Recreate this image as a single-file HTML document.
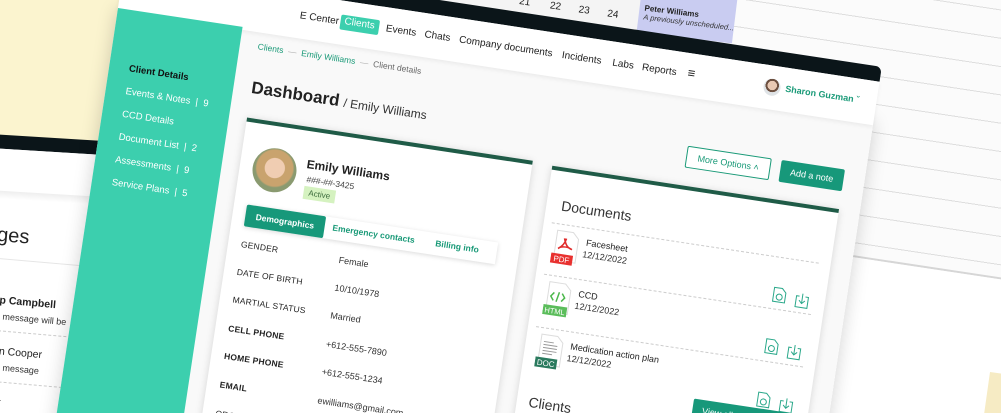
<!DOCTYPE html>
<html style="width:1001px;height:413px;overflow:hidden"><head><meta charset="utf-8"><style>
*{box-sizing:border-box;margin:0;padding:0}
body{width:1001px;height:413px;overflow:hidden;position:relative;background:#f4f4f4;font-family:"Liberation Sans",sans-serif;color:#222}
.abs{position:absolute}
.rot{position:absolute;transform-origin:0 0}
.panel{left:118px;top:8px;transform:rotate(8.6deg);width:764px;height:640px;box-shadow:0 0 18px rgba(0,0,0,.18)}
.nav span{position:absolute;top:-26px;font-size:10px;line-height:14px;color:#222;white-space:nowrap}
.side div{position:absolute;left:20px;font-size:9.5px;color:#fff;white-space:nowrap}
.card{position:absolute;background:#fff;border-top:4px solid #1f5b47;box-shadow:0 1px 8px rgba(0,0,0,.15)}
.lab{position:absolute;left:13px;font-size:8.5px;color:#222;letter-spacing:.2px}
.val{position:absolute;left:112px;font-size:9px;color:#333}
.dot{position:absolute;left:8px;right:12px;border-top:1px dashed #ccc}
.dname{position:absolute;left:45px;font-size:9px;color:#222}
.ddate{position:absolute;left:43px;font-size:9px;color:#333}
</style></head><body>

<div class="rot" style="left:700px;top:-120px;transform:rotate(8.6deg);width:420px;height:600px;background:#fbfbfb">
  <div class="abs" style="left:0;top:0;width:420px;height:348px;background:repeating-linear-gradient(180deg,transparent 0 27px,#dedede 27px 28px)"></div>
  <div class="abs" style="left:0;top:348px;width:420px;height:2px;background:#d6d6d6"></div>
  <div class="abs" style="left:0;top:350px;width:420px;height:300px;background:#fff"></div>
</div>
<div class="rot" style="left:990px;top:372px;transform:rotate(8deg);width:40px;height:80px;background:#f6ebc4"></div>

<div class="rot" style="left:520px;top:-4px;transform:rotate(8deg);font-size:10px;color:#222">
  <span class="abs" style="left:0;top:0">21</span><span class="abs" style="left:31px;top:0">22</span><span class="abs" style="left:60px;top:0">23</span><span class="abs" style="left:89px;top:0">24</span>
</div>
<div class="rot" style="left:642px;top:-12px;transform:rotate(7deg);width:96px;height:44px;background:#c9ccf1;padding:15px 5px 0 5px">
  <div style="font-size:8px;font-weight:bold;color:#222">Peter Williams</div>
  <div style="font-size:7.5px;font-style:italic;color:#333;white-space:nowrap">A previously unscheduled...</div>
</div>

<div class="rot" style="left:-10px;top:-60px;transform:rotate(3.5deg);width:380px;height:200px;background:#fbf4cf"></div>
<div class="rot" style="left:-10px;top:134px;transform:rotate(3.5deg);width:320px;height:14px;background:#0b1519"></div>
<div class="rot" style="left:-10px;top:148px;transform:rotate(3.5deg);width:320px;height:300px;background:#fff">
  <div class="abs" style="left:0;top:42px;width:320px;height:8px;background:linear-gradient(#eee,#fff)"></div>
</div>
<div class="rot" style="left:-22px;top:212px;transform:rotate(5deg);width:260px;height:220px">
  <div class="abs" style="left:0;top:10px;font-size:20px;color:#222">sages</div>
  <div class="abs" style="left:0;top:44px;width:240px;border-top:1px solid #e6e6e6"></div>
  <div class="abs" style="left:14px;top:80px;font-size:10.5px;font-weight:bold">hilip Campbell</div>
  <div class="abs" style="left:14px;top:97px;font-size:9px;color:#333">Last message will be</div>
  <div class="abs" style="left:0;top:116px;width:230px;border-top:1px dashed #ccc"></div>
  <div class="abs" style="left:12px;top:131px;font-size:10.5px">areen Cooper</div>
  <div class="abs" style="left:12px;top:148px;font-size:9px;color:#333">Photo message</div>
  <div class="abs" style="left:0;top:167px;width:230px;border-top:1px dashed #ccc"></div>
  <div class="abs" style="left:14px;top:182px;font-size:10.5px">Miller</div>
</div>

<div class="rot panel">
  <div class="abs" style="left:0;top:-56px;width:764px;height:16px;background:#0b1519;border-radius:0 6px 0 0"></div>
  <div class="abs" style="left:0;top:-41px;width:764px;height:681px;background:#f9f9f9"></div>
  <div class="abs" style="left:0;top:-41px;width:764px;height:44px;background:#fff;box-shadow:0 2px 4px rgba(0,0,0,.06)"></div>
  <div class="nav">
    <span style="left:181px">E Center</span>
    <span style="left:222px;top:-27px;background:#3ccfae;color:#fff;padding:0 4px;border-radius:2px;height:15px">Clients</span>
    <span style="left:268px">Events</span>
    <span style="left:307px">Chats</span>
    <span style="left:342px">Company documents</span>
    <span style="left:446px">Incidents</span>
    <span style="left:497px">Labs</span>
    <span style="left:527px">Reports</span>
    <span style="left:573px;font-size:13px;top:-28px">&#8801;</span>
  </div>
  <div class="abs" style="left:650px;top:-28px;width:17px;height:17px;border-radius:50%;background:radial-gradient(circle at 50% 40%,#e9c9b3 0 35%,#6d5040 36% 50%,#dfe3e6 51%)"></div>
  <div class="abs" style="left:672px;top:-25px;font-size:9px;font-weight:bold;color:#1a9a78;white-space:nowrap">Sharon Guzman &#711;</div>

  <div class="abs side" style="left:0;top:0;width:126px;height:640px;background:#3ccfae">
    <div style="top:53px;color:#111;font-weight:bold">Client Details</div>
    <div style="top:76px">Events &amp; Notes &nbsp;|&nbsp; 9</div>
    <div style="top:99px">CCD Details</div>
    <div style="top:122px">Document List &nbsp;|&nbsp; 2</div>
    <div style="top:145px">Assessments &nbsp;|&nbsp; 9</div>
    <div style="top:168px">Service Plans &nbsp;|&nbsp; 5</div>
  </div>

  <div class="abs" style="left:144px;top:12px;font-size:8.5px;color:#1a9a78;white-space:nowrap">Clients <span style="color:#aaa">&nbsp;&#8212;&nbsp;</span> Emily Williams <span style="color:#aaa">&nbsp;&#8212;&nbsp;</span> <span style="color:#666">Client details</span></div>
  <div class="abs" style="left:144px;top:49px;white-space:nowrap"><span style="font-size:17px;font-weight:bold;color:#222">Dashboard</span> <span style="font-size:12px;color:#333">/ Emily Williams</span></div>

  <div class="abs" style="left:584px;top:51px;width:85px;height:22px;border:1px solid #1a9a78;border-radius:2px;font-size:9px;color:#1a9a78;text-align:center;line-height:20px;background:#fff">More Options &#708;</div>
  <div class="abs" style="left:679px;top:51px;width:64px;height:22px;border-radius:2px;font-size:9px;color:#fff;text-align:center;line-height:22px;background:#17987a">Add a note</div>

  <div class="card" style="left:144px;top:89px;width:289px;height:560px">
    <div class="abs" style="left:13px;top:22px;width:44px;height:44px;border-radius:50%;background:radial-gradient(circle at 50% 45%,#f0cdb2 0 30%,#c9a36e 32% 55%,#8a9a70 60%)"></div>
    <div class="abs" style="left:66px;top:26px;font-size:12px;font-weight:bold;color:#222;white-space:nowrap">Emily Williams</div>
    <div class="abs" style="left:68px;top:43px;font-size:8.5px;color:#444">###-##-3425</div>
    <div class="abs" style="left:67px;top:55px;width:32px;height:13px;background:#d5f2c0;font-size:8px;color:#3a6a3a;text-align:center;line-height:13px">Active</div>
    <div class="abs" style="left:13px;top:82px;width:254px;height:22px;background:#fff;box-shadow:0 1px 5px rgba(0,0,0,.15)">
      <div class="abs" style="left:0;top:0;width:80px;height:22px;background:#17987a;border-radius:2px;color:#fff;font-size:8.5px;font-weight:bold;text-align:center;line-height:22px">Demographics</div>
      <div class="abs" style="left:88px;top:5px;color:#1a9a78;font-size:8.5px;font-weight:bold;white-space:nowrap">Emergency contacts</div>
      <div class="abs" style="left:192px;top:5px;color:#1a9a78;font-size:8.5px;font-weight:bold">Billing info</div>
    </div>
    <div class="lab" style="top:117px">GENDER</div><div class="val" style="top:118px">Female</div>
    <div class="lab" style="top:145px">DATE OF BIRTH</div><div class="val" style="top:146px">10/10/1978</div>
    <div class="lab" style="top:173px">MARTIAL STATUS</div><div class="val" style="top:174px">Married</div>
    <div class="lab" style="top:202px;font-weight:bold">CELL PHONE</div><div class="val" style="top:203px">+612-555-7890</div>
    <div class="lab" style="top:230px;font-weight:bold">HOME PHONE</div><div class="val" style="top:231px">+612-555-1234</div>
    <div class="lab" style="top:259px;font-weight:bold">EMAIL</div><div class="val" style="top:260px">ewilliams@gmail.com</div>
    <div class="lab" style="top:288px">ORGANIZATION</div>
  </div>

  <div class="card" style="left:453px;top:91px;width:290px;height:500px">
    <div class="abs" style="left:15px;top:26px;font-size:14px;color:#333">Documents</div>
    <div class="dot" style="top:52px"></div>
    <svg class="abs" style="left:12px;top:58px" width="28" height="36" viewBox="0 0 28 36"><path d="M3 1h16l6 6v24H3z" fill="#fff" stroke="#ddd"/><path d="M11 8c2 6 4 9 9 10M13 8c-1 6-4 9-7 11M7 18c4-2 9-2 13 0" stroke="#e02b2b" stroke-width="1.6" fill="none"/><rect x="0" y="24" width="22" height="10" fill="#e8312f"/><text x="11" y="32" font-size="8" fill="#fff" text-anchor="middle" font-family="Liberation Sans">PDF</text></svg>
    <div class="dname" style="top:62px">Facesheet</div><div class="ddate" style="top:74px">12/12/2022</div>
    <svg class="abs" style="left:237px;top:82px" width="14" height="16" viewBox="0 0 14 16"><path d="M1 1h8l4 4v10H1z" fill="none" stroke="#2aa88a"/><circle cx="7" cy="10" r="3" fill="none" stroke="#2aa88a"/></svg>
    <svg class="abs" style="left:260px;top:84px" width="14" height="16" viewBox="0 0 14 16"><path d="M4 4H1v11h12V4h-3M7 1v10M4 8l3 3 3-3" fill="none" stroke="#2aa88a"/></svg>
    <div class="dot" style="top:104px"></div>
    <svg class="abs" style="left:12px;top:110px" width="28" height="36" viewBox="0 0 28 36"><path d="M3 1h16l6 6v24H3z" fill="#fff" stroke="#ddd"/><path d="M9 11l-3 4 3 4M17 11l3 4-3 4M14 10l-2 10" stroke="#4cb84c" stroke-width="1.5" fill="none"/><rect x="0" y="24" width="24" height="10" fill="#5bbd5b"/><text x="12" y="32" font-size="7.5" fill="#fff" text-anchor="middle" font-family="Liberation Sans">HTML</text></svg>
    <div class="dname" style="top:114px">CCD</div><div class="ddate" style="top:126px">12/12/2022</div>
    <svg class="abs" style="left:237px;top:134px" width="14" height="16" viewBox="0 0 14 16"><path d="M1 1h8l4 4v10H1z" fill="none" stroke="#2aa88a"/><circle cx="7" cy="10" r="3" fill="none" stroke="#2aa88a"/></svg>
    <svg class="abs" style="left:260px;top:136px" width="14" height="16" viewBox="0 0 14 16"><path d="M4 4H1v11h12V4h-3M7 1v10M4 8l3 3 3-3" fill="none" stroke="#2aa88a"/></svg>
    <div class="dot" style="top:157px"></div>
    <svg class="abs" style="left:12px;top:163px" width="28" height="36" viewBox="0 0 28 36"><path d="M3 1h16l6 6v24H3z" fill="#fff" stroke="#ddd"/><path d="M6 8h10M6 11h14M6 14h14M6 17h14M6 20h10" stroke="#999" stroke-width="1"/><rect x="0" y="24" width="22" height="10" fill="#2a7a5e"/><text x="11" y="32" font-size="8" fill="#fff" text-anchor="middle" font-family="Liberation Sans">DOC</text></svg>
    <div class="dname" style="top:167px">Medication action plan</div><div class="ddate" style="top:179px">12/12/2022</div>
    <svg class="abs" style="left:237px;top:188px" width="14" height="16" viewBox="0 0 14 16"><path d="M1 1h8l4 4v10H1z" fill="none" stroke="#2aa88a"/><circle cx="7" cy="10" r="3" fill="none" stroke="#2aa88a"/></svg>
    <svg class="abs" style="left:260px;top:190px" width="14" height="16" viewBox="0 0 14 16"><path d="M4 4H1v11h12V4h-3M7 1v10M4 8l3 3 3-3" fill="none" stroke="#2aa88a"/></svg>
    <div class="abs" style="left:175px;top:205px;width:97px;height:22px;border-radius:2px;background:#17987a;color:#fff;font-size:9px;text-align:center;line-height:22px">View all documents</div>
    <div class="abs" style="left:12px;top:225px;font-size:14px;color:#333">Clients</div>
  </div>
</div>
</body></html>
